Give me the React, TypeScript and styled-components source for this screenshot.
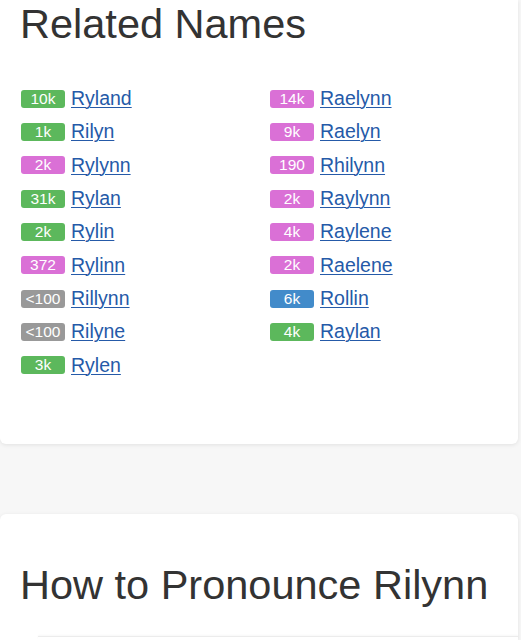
import React from "react";
import styled, { createGlobalStyle } from "styled-components";

const Global = createGlobalStyle`
  html, body { margin: 0; padding: 0; background: #f7f7f7; }
  body { font-family: "Liberation Sans", Arial, Helvetica, sans-serif; color: #333; overflow: hidden; }
`;

const Page = styled.div`
  width: 518px;
  display: flex;
  flex-direction: column;
  gap: 70px;
`;

const Card = styled.section<{ $top?: boolean }>`
  background: #fff;
  border-radius: ${(p) => (p.$top ? "0 0 6px 6px" : "6px 6px 0 0")};
  box-shadow: 0 1px 4px rgba(0, 0, 0, 0.09);
  padding: ${(p) => (p.$top ? "2px 0 62px 19px" : "49px 0 0 19px")};
`;

const Heading = styled.h2`
  margin: 0;
  padding-left: 1px;
  font-size: 41.5px;
  line-height: 44px;
  font-weight: 400;
  color: #333;
`;

const Grid = styled.div`
  margin-top: 36px;
  display: grid;
  grid-template-columns: 249px 249px;
  grid-template-rows: repeat(9, 33.33px);
  padding-left: 2px;
`;

const Item = styled.div`
  display: flex;
  align-items: center;
  gap: 6px;
`;

const colors: Record<string, string> = {
  green: "#5cb85c",
  pink: "#da70d6",
  gray: "#999999",
  blue: "#428bca",
};

const Badge = styled.span<{ $c: string }>`
  display: inline-flex;
  align-items: center;
  justify-content: center;
  width: 44px;
  height: 18px;
  border-radius: 3px;
  background: ${(p) => colors[p.$c]};
  color: #fff;
  font-size: 15.5px;
  line-height: 18px;
`;

const Name = styled.a`
  font-size: 19.5px;
  color: #255aa8;
  text-decoration: underline;
  text-underline-offset: 2px;
  text-decoration-thickness: 1px;
`;

const Rule = styled.div`
  margin: 29px 0 0 19px;
  height: 3px;
  border-top: 1px solid #ececec;
  box-shadow: 0 -1px 2px rgba(0, 0, 0, 0.03);
`;

type Entry = [string, string, string];

const left: Entry[] = [
  ["10k", "green", "Ryland"],
  ["1k", "green", "Rilyn"],
  ["2k", "pink", "Rylynn"],
  ["31k", "green", "Rylan"],
  ["2k", "green", "Rylin"],
  ["372", "pink", "Rylinn"],
  ["<100", "gray", "Rillynn"],
  ["<100", "gray", "Rilyne"],
  ["3k", "green", "Rylen"],
];
const right: Entry[] = [
  ["14k", "pink", "Raelynn"],
  ["9k", "pink", "Raelyn"],
  ["190", "pink", "Rhilynn"],
  ["2k", "pink", "Raylynn"],
  ["4k", "pink", "Raylene"],
  ["2k", "pink", "Raelene"],
  ["6k", "blue", "Rollin"],
  ["4k", "green", "Raylan"],
];

const Column = styled.div`
  display: contents;
`;

export default function App() {
  return (
    <>
      <Global />
      <Page>
        <Card $top>
          <Heading>Related Names</Heading>
          <Grid>
            <Column>
              {left.map(([n, c, name], i) => (
                <Item key={name} style={{ gridColumn: 1, gridRow: i + 1 }}>
                  <Badge $c={c}>{n}</Badge>
                  <Name href="#">{name}</Name>
                </Item>
              ))}
            </Column>
            <Column>
              {right.map(([n, c, name], i) => (
                <Item key={name} style={{ gridColumn: 2, gridRow: i + 1 }}>
                  <Badge $c={c}>{n}</Badge>
                  <Name href="#">{name}</Name>
                </Item>
              ))}
            </Column>
          </Grid>
        </Card>
        <Card>
          <Heading>How to Pronounce Rilynn</Heading>
          <Rule />
        </Card>
      </Page>
    </>
  );
}
